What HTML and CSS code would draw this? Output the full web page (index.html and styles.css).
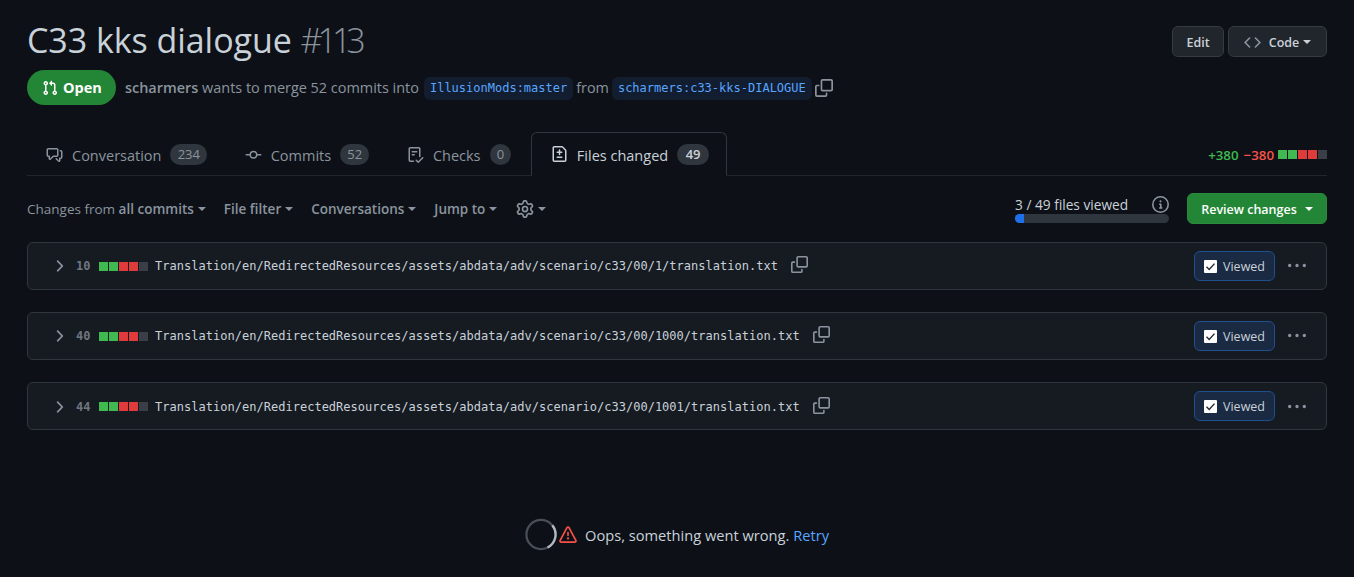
FILE: index.html
```html
<!DOCTYPE html>
<html lang="en">
<head>
<meta charset="utf-8">
<title>C33 kks dialogue #113</title>
<link rel="stylesheet" href="styles.css">
</head>
<body>
<svg class="sprite" width="0" height="0" aria-hidden="true">
  <defs>
    <symbol id="i-copy" viewBox="0 0 16 16"><path d="M0 6.75C0 5.784.784 5 1.75 5h1.5a.75.75 0 0 1 0 1.5h-1.5a.25.25 0 0 0-.25.25v7.5c0 .138.112.25.25.25h7.5a.25.25 0 0 0 .25-.25v-1.5a.75.75 0 0 1 1.5 0v1.5A1.75 1.75 0 0 1 9.25 16h-7.5A1.75 1.75 0 0 1 0 14.25Z"/><path d="M5 1.75C5 .784 5.784 0 6.75 0h7.5C15.216 0 16 .784 16 1.75v7.5A1.75 1.75 0 0 1 14.25 11h-7.5A1.75 1.75 0 0 1 5 9.25Zm1.75-.25a.25.25 0 0 0-.25.25v7.5c0 .138.112.25.25.25h7.5a.25.25 0 0 0 .25-.25v-7.5a.25.25 0 0 0-.25-.25Z"/></symbol>
    <symbol id="i-chev" viewBox="0 0 16 16"><path d="M6.22 3.22a.75.75 0 0 1 1.06 0l4.25 4.25a.75.75 0 0 1 0 1.06l-4.25 4.25a.751.751 0 0 1-1.042-.018.751.751 0 0 1-.018-1.042L9.94 8 6.22 4.28a.75.75 0 0 1 0-1.06Z"/></symbol>
    <symbol id="i-kebab" viewBox="0 0 16 16"><path d="M8 9a1.5 1.5 0 1 0 0-3 1.5 1.5 0 0 0 0 3ZM1.5 9a1.5 1.5 0 1 0 0-3 1.5 1.5 0 0 0 0 3Zm13 0a1.5 1.5 0 1 0 0-3 1.5 1.5 0 0 0 0 3Z"/></symbol>
  </defs>
</svg>
<main class="page">
  <header class="head">
    <h1 class="title">C33 kks dialogue <span class="num">#113</span></h1>
    <div class="actions">
      <button class="btn edit">Edit</button>
      <button class="btn code">
        <svg class="ico code-ico" viewBox="0 0 16 16"><path d="m11.28 3.22 4.25 4.25a.75.75 0 0 1 0 1.06l-4.25 4.25a.749.749 0 0 1-1.275-.326.749.749 0 0 1 .215-.734L13.94 8l-3.72-3.72a.749.749 0 0 1 .326-1.275.749.749 0 0 1 .734.215Zm-6.56 0a.751.751 0 0 1 1.042.018.751.751 0 0 1 .018 1.042L2.06 8l3.72 3.72a.749.749 0 0 1-.326 1.275.749.749 0 0 1-.734-.215L.47 8.53a.75.75 0 0 1 0-1.06Z"/></svg>
        <span>Code</span><i class="caret"></i>
      </button>
    </div>
  </header>

  <div class="meta">
    <span class="state">
      <svg class="ico" viewBox="0 0 16 16"><path d="M1.5 3.25a2.25 2.25 0 1 1 3 2.122v5.256a2.251 2.251 0 1 1-1.5 0V5.372A2.25 2.25 0 0 1 1.5 3.25Zm5.677-.177L9.573.677A.25.25 0 0 1 10 .854V2.5h1A2.5 2.5 0 0 1 13.5 5v5.628a2.251 2.251 0 1 1-1.5 0V5a1 1 0 0 0-1-1h-1v1.646a.25.25 0 0 1-.427.177L7.177 3.427a.25.25 0 0 1 0-.354ZM3.75 2.5a.75.75 0 1 0 0 1.5.75.75 0 0 0 0-1.5Zm0 9.5a.75.75 0 1 0 0 1.5.75.75 0 0 0 0-1.5Zm8.25.75a.75.75 0 1 0 1.5 0 .75.75 0 0 0-1.5 0Z"/></svg>
      Open
    </span>
    <span class="meta-text lead"><b>scharmers</b> wants to merge 52 commits into</span>
    <span class="ref">IllusionMods:master</span>
    <span class="meta-text from">from</span>
    <span class="ref">scharmers:c33-kks-DIALOGUE</span>
    <svg class="ico copy-meta"><use href="#i-copy"/></svg>
  </div>

  <nav class="tabs">
    <a class="tab">
      <svg class="ico" viewBox="0 0 16 16"><path d="M1.75 1h8.5c.966 0 1.75.784 1.75 1.75v5.5A1.75 1.75 0 0 1 10.25 10H7.061l-2.574 2.573A1.458 1.458 0 0 1 2 11.543V10h-.25A1.75 1.75 0 0 1 0 8.25v-5.5C0 1.784.784 1 1.75 1ZM1.5 2.75v5.5c0 .138.112.25.25.25h1a.75.75 0 0 1 .75.75v2.19l2.72-2.72a.749.749 0 0 1 .53-.22h3.5a.25.25 0 0 0 .25-.25v-5.5a.25.25 0 0 0-.25-.25h-8.5a.25.25 0 0 0-.25.25Zm13 2a.25.25 0 0 0-.25-.25h-.5a.75.75 0 0 1 0-1.5h.5c.966 0 1.75.784 1.75 1.75v5.5A1.75 1.75 0 0 1 14.25 12H14v1.543a1.458 1.458 0 0 1-2.487 1.03L9.22 12.28a.749.749 0 0 1 .326-1.275.749.749 0 0 1 .734.215l2.22 2.22v-2.19a.75.75 0 0 1 .75-.75h1a.25.25 0 0 0 .25-.25Z"/></svg>
      <span class="tab-label">Conversation</span><span class="counter">234</span>
    </a>
    <a class="tab">
      <svg class="ico" viewBox="0 0 16 16"><path d="M11.93 8.5a4.002 4.002 0 0 1-7.86 0H.75a.75.75 0 0 1 0-1.5h3.32a4.002 4.002 0 0 1 7.86 0h3.32a.75.75 0 0 1 0 1.5Zm-1.43-.75a2.5 2.5 0 1 0-5 0 2.5 2.5 0 0 0 5 0Z"/></svg>
      <span class="tab-label">Commits</span><span class="counter">52</span>
    </a>
    <a class="tab">
      <svg class="ico" viewBox="0 0 16 16"><path d="M2.5 1.75v11.5c0 .138.112.25.25.25h3.17a.75.75 0 0 1 0 1.5H2.75A1.75 1.75 0 0 1 1 13.25V1.75C1 .784 1.784 0 2.75 0h8.5C12.216 0 13 .784 13 1.75v7.736a.75.75 0 0 1-1.5 0V1.75a.25.25 0 0 0-.25-.25h-8.5a.25.25 0 0 0-.25.25Zm13.274 9.537v-.001l-4.557 4.45a.75.75 0 0 1-1.055-.008l-1.943-1.95a.75.75 0 0 1 1.062-1.058l1.419 1.425 4.026-3.932a.75.75 0 1 1 1.048 1.074ZM4.75 4h4.5a.75.75 0 0 1 0 1.5h-4.5a.75.75 0 0 1 0-1.5ZM4 7.75A.75.75 0 0 1 4.75 7h2a.75.75 0 0 1 0 1.5h-2A.75.75 0 0 1 4 7.75Z"/></svg>
      <span class="tab-label">Checks</span><span class="counter">0</span>
    </a>
    <a class="tab active">
      <svg class="ico" viewBox="0 0 16 16"><path d="M1 1.75C1 .784 1.784 0 2.75 0h7.586c.464 0 .909.184 1.237.513l2.914 2.914c.329.328.513.773.513 1.237v9.586A1.75 1.75 0 0 1 13.25 16H2.75A1.75 1.75 0 0 1 1 14.25Zm1.75-.25a.25.25 0 0 0-.25.25v12.5c0 .138.112.25.25.25h10.5a.25.25 0 0 0 .25-.25V4.664a.25.25 0 0 0-.073-.177l-2.914-2.914a.25.25 0 0 0-.177-.073ZM8 3.25a.75.75 0 0 1 .75.75v1.5h1.5a.75.75 0 0 1 0 1.5h-1.5v1.5a.75.75 0 0 1-1.5 0V7h-1.5a.75.75 0 0 1 0-1.5h1.5V4A.75.75 0 0 1 8 3.25Zm-3 8a.75.75 0 0 1 .75-.75h4.5a.75.75 0 0 1 0 1.5h-4.5a.75.75 0 0 1-.75-.75Z"/></svg>
      <span class="tab-label">Files changed</span><span class="counter">49</span>
    </a>
    <div class="stats">
      <span class="add">+380</span>
      <span class="del">−380</span>
      <span class="blocks"><i class="g"></i><i class="g"></i><i class="r"></i><i class="r"></i><i class="n"></i></span>
    </div>
  </nav>

  <div class="toolbar">
    <div class="filters">
      <span class="filter">Changes from <b>all commits</b><i class="caret"></i></span>
      <span class="filter"><b>File filter</b><i class="caret"></i></span>
      <span class="filter"><b>Conversations</b><i class="caret"></i></span>
      <span class="filter"><b>Jump to</b><i class="caret"></i></span>
      <span class="filter gear">
        <svg class="ico gear-ico" viewBox="0 0 16 16"><path d="M8 0a8.2 8.2 0 0 1 .701.031C9.444.095 9.99.645 10.16 1.29l.288 1.107c.018.066.079.158.212.224.231.114.454.243.668.386.123.082.233.09.299.071l1.103-.303c.644-.176 1.392.021 1.82.63.27.385.506.792.704 1.218.315.675.111 1.422-.364 1.891l-.814.806c-.049.048-.098.147-.088.294.016.257.016.515 0 .772-.01.147.038.246.088.294l.814.806c.475.469.679 1.216.364 1.891a7.977 7.977 0 0 1-.704 1.217c-.428.61-1.176.807-1.82.63l-1.102-.302c-.067-.019-.177-.011-.3.071a5.909 5.909 0 0 1-.668.386c-.133.066-.194.158-.211.224l-.29 1.106c-.168.646-.715 1.196-1.458 1.26a8.006 8.006 0 0 1-1.402 0c-.743-.064-1.289-.614-1.458-1.26l-.289-1.106c-.018-.066-.079-.158-.212-.224a5.738 5.738 0 0 1-.668-.386c-.123-.082-.233-.09-.299-.071l-1.103.303c-.644.176-1.392-.021-1.82-.63a8.12 8.12 0 0 1-.704-1.218c-.315-.675-.111-1.422.363-1.891l.815-.806c.05-.048.098-.147.088-.294a6.214 6.214 0 0 1 0-.772c.01-.147-.038-.246-.088-.294l-.815-.806C.635 6.045.431 5.298.746 4.623a7.92 7.92 0 0 1 .704-1.217c.428-.61 1.176-.807 1.82-.63l1.102.302c.067.019.177.011.3-.071.214-.143.437-.272.668-.386.133-.066.194-.158.211-.224l.29-1.106C6.009.645 6.556.095 7.299.03 7.53.01 7.764 0 8 0Zm-.571 1.525c-.036.003-.108.036-.137.146l-.289 1.105c-.147.561-.549.967-.998 1.189-.173.086-.34.183-.5.29-.417.278-.97.423-1.529.27l-1.103-.303c-.109-.03-.175.016-.195.045-.22.312-.412.644-.573.99-.014.031-.021.11.059.19l.815.806c.411.406.562.957.53 1.456a4.709 4.709 0 0 0 0 .582c.032.499-.119 1.05-.53 1.456l-.815.806c-.081.08-.073.159-.059.19.162.346.353.677.573.989.02.03.085.076.195.046l1.102-.303c.56-.153 1.113-.008 1.53.27.161.107.328.204.501.29.447.222.85.629.997 1.189l.289 1.105c.029.109.101.143.137.146a6.6 6.6 0 0 0 1.142 0c.036-.003.108-.036.137-.146l.289-1.105c.147-.561.549-.967.998-1.189.173-.086.34-.183.5-.29.417-.278.97-.423 1.529-.27l1.103.303c.109.029.175-.016.195-.045.22-.313.411-.644.573-.99.014-.031.021-.11-.059-.19l-.815-.806c-.411-.406-.562-.957-.53-1.456a4.709 4.709 0 0 0 0-.582c-.032-.499.119-1.05.53-1.456l.815-.806c.081-.08.073-.159.059-.19a6.464 6.464 0 0 0-.573-.989c-.02-.03-.085-.076-.195-.046l-1.102.303c-.56.153-1.113.008-1.53-.27a4.44 4.44 0 0 0-.501-.29c-.447-.222-.85-.629-.997-1.189l-.289-1.105c-.029-.11-.101-.143-.137-.146a6.6 6.6 0 0 0-1.142 0ZM11 8a3 3 0 1 1-6 0 3 3 0 0 1 6 0ZM9.5 8a1.5 1.5 0 1 0-3.001.001A1.5 1.5 0 0 0 9.5 8Z"/></svg>
        <i class="caret"></i>
      </span>
    </div>
    <div class="progress">
      <div class="progress-top">
        <span>3 / 49 files viewed</span>
        <svg class="ico info" viewBox="0 0 16 16"><path d="M0 8a8 8 0 1 1 16 0A8 8 0 0 1 0 8Zm8-6.5a6.5 6.5 0 1 0 0 13 6.5 6.5 0 0 0 0-13ZM6.5 7.75A.75.75 0 0 1 7.25 7h1a.75.75 0 0 1 .75.75v2.75h.25a.75.75 0 0 1 0 1.5h-2a.75.75 0 0 1 0-1.5h.25v-2h-.25a.75.75 0 0 1-.75-.75ZM8 6a1 1 0 1 1 0-2 1 1 0 0 1 0 2Z"/></svg>
      </div>
      <div class="bar"><div class="bar-fill"></div></div>
    </div>
    <button class="btn review">Review changes<i class="caret"></i></button>
  </div>

  <section class="files">
    <article class="file">
      <svg class="ico chev"><use href="#i-chev"/></svg>
      <span class="count">10</span>
      <span class="blocks"><i class="g"></i><i class="g"></i><i class="r"></i><i class="r"></i><i class="n"></i></span>
      <span class="path">Translation/en/RedirectedResources/assets/abdata/adv/scenario/c33/00/1/translation.txt</span>
      <svg class="ico copy-file"><use href="#i-copy"/></svg>
      <span class="viewed"><i class="check"><svg viewBox="0 0 13 13"><path d="M2.5 6.8 5.2 9.4 10.5 3.6"/></svg></i>Viewed</span>
      <svg class="ico kebab"><use href="#i-kebab"/></svg>
    </article>
    <article class="file">
      <svg class="ico chev"><use href="#i-chev"/></svg>
      <span class="count">40</span>
      <span class="blocks"><i class="g"></i><i class="g"></i><i class="r"></i><i class="r"></i><i class="n"></i></span>
      <span class="path">Translation/en/RedirectedResources/assets/abdata/adv/scenario/c33/00/1000/translation.txt</span>
      <svg class="ico copy-file"><use href="#i-copy"/></svg>
      <span class="viewed"><i class="check"><svg viewBox="0 0 13 13"><path d="M2.5 6.8 5.2 9.4 10.5 3.6"/></svg></i>Viewed</span>
      <svg class="ico kebab"><use href="#i-kebab"/></svg>
    </article>
    <article class="file">
      <svg class="ico chev"><use href="#i-chev"/></svg>
      <span class="count">44</span>
      <span class="blocks"><i class="g"></i><i class="g"></i><i class="r"></i><i class="r"></i><i class="n"></i></span>
      <span class="path">Translation/en/RedirectedResources/assets/abdata/adv/scenario/c33/00/1001/translation.txt</span>
      <svg class="ico copy-file"><use href="#i-copy"/></svg>
      <span class="viewed"><i class="check"><svg viewBox="0 0 13 13"><path d="M2.5 6.8 5.2 9.4 10.5 3.6"/></svg></i>Viewed</span>
      <svg class="ico kebab"><use href="#i-kebab"/></svg>
    </article>
  </section>

  <div class="oops">
    <svg class="spinner" viewBox="0 0 34 34"><circle cx="17" cy="17" r="15.5"/><path d="M29 7.2A15.5 15.5 0 0 1 24 30.8"/></svg>
    <svg class="ico alert" viewBox="0 0 16 16"><path d="M6.457 1.047c.659-1.234 2.427-1.234 3.086 0l6.082 11.378A1.75 1.75 0 0 1 14.082 15H1.918a1.75 1.75 0 0 1-1.543-2.575Zm1.763.707a.25.25 0 0 0-.44 0L1.698 13.132a.25.25 0 0 0 .22.368h12.164a.25.25 0 0 0 .22-.368Zm.53 3.996v2.5a.75.75 0 0 1-1.5 0v-2.5a.75.75 0 0 1 1.5 0ZM9 11a1 1 0 1 1-2 0 1 1 0 0 1 2 0Z"/></svg>
    <span class="oops-text">Oops, something went wrong. <a class="retry">Retry</a></span>
  </div>
</main>
</body>
</html>
```

FILE: styles.css
```css
* { box-sizing: border-box; }
html, body { margin: 0; height: 100%; }
body {
  background: #0d1117;
  color: #c9d1d9;
  font-family: "Open Sans", "Noto Sans", sans-serif;
  font-size: 14px;
  overflow: hidden;
}
.sprite { position: absolute; }
.page { padding: 0 27px; }
.ico { width: 16px; height: 16px; fill: currentColor; flex: none; display: block; }

.head { display: flex; justify-content: space-between; align-items: flex-start; padding-top: 20px; height: 60px; }
.title { margin: 0; font-size: 34px; font-weight: 400; line-height: 40px; letter-spacing: -0.05px; }
.num { color: #8b949e; font-weight: 300; letter-spacing: -5px; }
.actions { display: flex; gap: 4px; margin-top: 6px; }
.btn {
  display: flex; align-items: center; justify-content: center;
  height: 31px; padding: 0; border-radius: 6px;
  background: #21262d; border: 1px solid #363b42; color: #c9d1d9;
  font: 600 12.5px "Open Sans", sans-serif;
}
.edit { width: 52px; padding-top: 1px; }
.code { width: 99px; padding-top: 1px; }
.code-ico { color: #8b949e; margin-right: 8px; width: 17px; height: 17px; }
.caret {
  display: inline-block; width: 0; height: 0; margin-left: 4px;
  border: 4px solid transparent; border-top-color: currentColor; border-bottom-width: 0;
}

.meta { display: flex; align-items: center; margin-top: 10px; height: 35px; }
.state {
  display: flex; align-items: center; gap: 5px; width: 89px; height: 35px; padding-left: 15px;
  background: #238636; color: #fff; border-radius: 18px; font-weight: 700; font-size: 14.5px;
}
.meta-text { color: #8b949e; font-size: 14.4px; }
.meta-text b { font-weight: 600; }
.lead { margin: 0 5px 0 9px; font-size: 14.45px; }
.from { margin: 0 3px; }
.ref {
  font: 12px "DejaVu Sans Mono", "Liberation Mono", monospace; color: #58a6ff;
  background: #121d2f; border-radius: 6px; height: 23px; line-height: 23px; padding: 0 6px; margin-top: 1px;
}
.copy-meta { width: 18px; height: 18px; color: #8b949e; margin-left: 3px; }

.tabs { display: flex; align-items: stretch; margin-top: 27px; height: 44px; border-bottom: 1px solid #21262d; }
.tab {
  display: flex; align-items: center; gap: 9px; padding: 0 17.5px 0 18px; height: 44px;
  color: #8b949e; font-size: 14.5px; border: 1px solid transparent; border-bottom: 0;
}
.tab .ico { width: 17px; height: 16px; }
.tab-label { padding-top: 2px; }
.tab.active { color: #c9d1d9; background: #0d1117; border-color: #30363d; border-radius: 6px 6px 0 0; margin-left: 1px; padding: 0 17px 0 19px; border-bottom: 1px solid #0d1117; }
.counter {
  display: block; height: 21px; line-height: 21px; padding: 0 7.2px; border-radius: 11px;
  background: #30363d; color: #8b949e; font-size: 13px; font-weight: 500;
}
.active .counter { color: #c9d1d9; font-weight: 600; padding: 0 8.5px; }
.stats { margin-left: auto; display: flex; align-items: center; gap: 5px; font-size: 13.3px; font-weight: 600; padding-top: 2px; }
.add { color: #3fb950; }
.del { color: #f85149; }
.stats .blocks { margin-left: -1px; }
.blocks { display: flex; gap: 1px; flex: none; }
.blocks i { display: block; width: 9px; height: 9px; }
.g { background: #3fb950; }
.r { background: #e03b3b; }
.n { background: #3a3f47; }

.toolbar { display: flex; align-items: flex-start; margin-top: 17px; height: 31px; }
.filters { display: flex; align-items: center; gap: 18px; height: 31px; color: #8b949e; font-size: 13.5px; }
.filter { display: flex; align-items: center; white-space: pre; }
.filter b { font-weight: 600; }
.gear { margin-left: 1px; }
.gear-ico { width: 18px; height: 18px; }
.progress { margin-left: auto; width: 154px; margin-right: 18px; margin-top: 2px; }
.progress-top { display: flex; justify-content: space-between; align-items: center; color: #c9d1d9; font-size: 13.7px; height: 19px; }
.info { color: #8b949e; width: 17px; height: 17px; }
.bar { height: 9px; background: #30363d; border-radius: 5px; overflow: hidden; }
.bar-fill { width: 9px; height: 9px; background: #1f6feb; }
.review {
  width: 140px; background: #238636; border-color: #2c8a3f; color: #fff; font-size: 12.5px; font-weight: 600; padding-top: 1px;
}
.review .caret { margin-left: 8px; }

.files { display: flex; flex-direction: column; gap: 22px; margin-top: 18px; }
.file {
  display: flex; align-items: center; height: 48px; padding: 0 20px 0 22px;
  background: #161b22; border: 1px solid #30363d; border-radius: 6px;
}
.file:last-child { padding-top: 1px; }
.file:last-child .viewed { margin-top: -1px; padding-top: 1px; }
.chev { color: #8b949e; width: 18px; height: 18px; }
.count { font: 700 12px "DejaVu Sans Mono", monospace; color: #6e7681; margin-left: 8px; width: 15px; }
.file .blocks { margin-left: 8px; }
.path { font: 12px "DejaVu Sans Mono", "Liberation Mono", monospace; letter-spacing: .02px; color: #c9d1d9; margin-left: 7px; }
.copy-file { width: 17px; height: 17px; color: #8b949e; margin-left: 13px; margin-top: -3px; }
.viewed {
  margin-left: auto; display: flex; align-items: center; width: 81px; height: 30px; padding-left: 9px;
  background: #1a2a42; border: 1px solid #1f4f8f; border-radius: 6px; font-size: 12.5px; color: #c9d1d9;
}
.check { display: block; width: 13px; height: 13px; background: #fff; margin-right: 6px; border-radius: 1px; }
.check svg { display: block; width: 13px; height: 13px; fill: none; stroke: #24292f; stroke-width: 1.4; }
.kebab { color: #8b949e; margin-left: 13px; width: 18px; height: 18px; }

.oops { display: flex; align-items: center; justify-content: center; margin-top: 88px; height: 33px; }
.spinner { width: 32px; height: 33px; fill: none; stroke-width: 2.4; flex: none; }
.spinner circle { stroke: #484f58; }
.spinner path { stroke: #b1bac4; }
.alert { width: 18px; height: 18px; color: #f85149; margin-left: 2px; }
.oops-text { margin-left: 8px; font-size: 14.65px; padding-top: 1px; }
.retry { color: #58a6ff; }
```
